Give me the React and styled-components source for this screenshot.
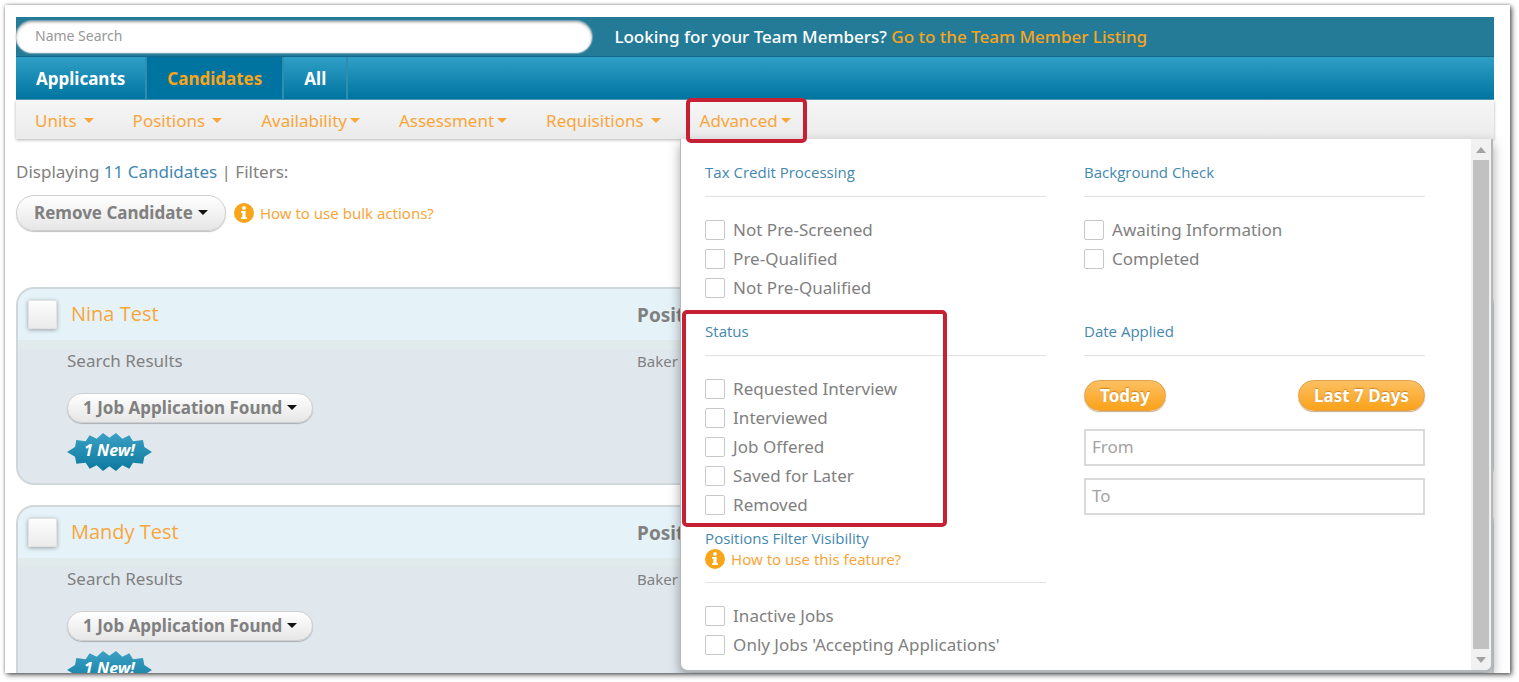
import styled, { createGlobalStyle, css } from "styled-components";

const FILTERS = ["Units", "Positions", "Availability", "Assessment", "Requisitions"];

const TAX_CREDIT = ["Not Pre-Screened", "Pre-Qualified", "Not Pre-Qualified"];
const BACKGROUND = ["Awaiting Information", "Completed"];
const STATUS = ["Requested Interview", "Interviewed", "Job Offered", "Saved for Later", "Removed"];
const VISIBILITY = ["Inactive Jobs", "Only Jobs 'Accepting Applications'"];

const CANDIDATES = [
    { name: "Nina Test", position: "Baker" },
    { name: "Mandy Test", position: "Baker" },
];

export default function App() {
    return (
        <>
            <GlobalStyle />
            <SSheet>
                <STopBar>
                    <SSearch type="search" placeholder="Name Search" aria-label="Name Search" />
                    <STopText>
                        Looking for your Team Members? <SLink href="#team">Go to the Team Member Listing</SLink>
                    </STopText>
                </STopBar>

                <STabs>
                    <STab href="#applicants">Applicants</STab>
                    <STab href="#candidates" $active>Candidates</STab>
                    <STab href="#all">All</STab>
                </STabs>

                <SFilterBar>
                    {FILTERS.map((name) => (
                        <SFilter key={name} type="button">
                            {name}
                            <SCaret $gap={name === "Availability" || name === "Assessment" ? 3 : 7} />
                        </SFilter>
                    ))}
                    <SFilter type="button" aria-expanded="true">
                        Advanced
                        <SCaret $gap={3} />
                        <SFilterMark />
                    </SFilter>
                    <AdvancedPanel />
                </SFilterBar>

                <SSummary>
                    Displaying <SCount>11 Candidates</SCount> | Filters:
                </SSummary>
                <SActions>
                    <SPill type="button" $large>
                        Remove Candidate
                        <SCaret $gap={5} />
                    </SPill>
                    <SHelp href="#bulk">
                        <InfoIcon />
                        How to use bulk actions?
                    </SHelp>
                </SActions>

                <SList>
                    {CANDIDATES.map((candidate) => (
                        <Candidate key={candidate.name} {...candidate} />
                    ))}
                </SList>
            </SSheet>
        </>
    );
}

const AdvancedPanel = () => (
    <SPanel>
        <SPanelGrid>
            <CheckGroup title="Tax Credit Processing" items={TAX_CREDIT} />
            <CheckGroup title="Background Check" items={BACKGROUND} />
            <CheckGroup title="Status" items={STATUS} marked />
            <section>
                <SGroupHead>
                    <SGroupTitle>Date Applied</SGroupTitle>
                </SGroupHead>
                <SDateButtons>
                    <SDateButton type="button">Today</SDateButton>
                    <SDateButton type="button">Last 7 Days</SDateButton>
                </SDateButtons>
                <SDateFields>
                    <SDateInput type="text" placeholder="From" aria-label="From" />
                    <SDateInput type="text" placeholder="To" aria-label="To" />
                </SDateFields>
            </section>
            <CheckGroup title="Positions Filter Visibility" items={VISIBILITY} help="How to use this feature?" />
        </SPanelGrid>
        <SScrollbar>
            <SScrollButton type="button" aria-label="Scroll up">
                <svg width="10" height="6" viewBox="0 0 10 6"><path d="M0 6 5 0l5 6z" fill="#a3a3a3" /></svg>
            </SScrollButton>
            <SThumb />
            <SScrollButton type="button" aria-label="Scroll down">
                <svg width="10" height="6" viewBox="0 0 10 6"><path d="M0 0h10L5 6z" fill="#a3a3a3" /></svg>
            </SScrollButton>
        </SScrollbar>
    </SPanel>
);

const CheckGroup = ({ title, items, help, marked }) => (
    <SGroup>
        {marked && <SGroupMark />}
        <SGroupHead>
            <SGroupTitle>{title}</SGroupTitle>
            {help && (
                <SHelp href="#feature">
                    <InfoIcon />
                    {help}
                </SHelp>
            )}
        </SGroupHead>
        <SChecks>
            {items.map((item) => (
                <SCheckLabel key={item}>
                    <SCheck type="checkbox" />
                    {item}
                </SCheckLabel>
            ))}
        </SChecks>
    </SGroup>
);

const Candidate = ({ name, position }) => (
    <SCard>
        <SCardHead>
            <SCardName>
                <SCardCheck type="checkbox" aria-label={`Select ${name}`} />
                <SNameLink href="#candidate">{name}</SNameLink>
            </SCardName>
            <SCardHeading>Positions</SCardHeading>
        </SCardHead>
        <SCardBody>
            <SResults>
                <SResultsTitle>Search Results</SResultsTitle>
                <SPill type="button">
                    1 Job Application Found
                    <SCaret $gap={5} />
                </SPill>
                <SBurst>
                    <BurstShape />
                    <SBurstText>1 New!</SBurstText>
                </SBurst>
            </SResults>
            <SPosition>{position}</SPosition>
        </SCardBody>
    </SCard>
);

const InfoIcon = () => (
    <svg width="20" height="20" viewBox="0 0 20 20" aria-hidden="true">
        <circle cx="10" cy="10" r="10" fill="#faa41a" />
        <circle cx="10" cy="5" r="1.9" fill="#fff" />
        <path d="M7 8h4.6v6.2H13V16H7v-1.8h1.4V9.800H7z" fill="#fff" />
    </svg>
);

const BurstShape = () => (
    <svg width="85" height="38" viewBox="0 0 255 114" aria-hidden="true">
        <defs>
            <linearGradient id="burst" x1="0" y1="0" x2="0" y2="1">
                <stop offset="0" stopColor="#3ba0c4" />
                <stop offset="1" stopColor="#0c789e" />
            </linearGradient>
        </defs>
        <path
            fill="url(#burst)"
            d="M0 57 24 42 28 21 56 25 68 7 89 17 108 0 127 14 147 0 166 17 187 7 198 25 228 21 232 42 255 57
               232 71 228 92 198 89 187 107 166 97 147 114 127 100 108 114 89 97 68 107 56 89 28 92 24 71z"
        />
    </svg>
);

const GlobalStyle = createGlobalStyle`
    * {
        box-sizing: border-box;
    }

    body {
        margin: 0;
        overflow: hidden;
        background: #fff;
        color: #808080;
        font-family: "Noto Sans", "Open Sans", sans-serif;
        font-size: 17px;
    }

    a {
        text-decoration: none;
    }

    button,
    input {
        margin: 0;
        font-family: inherit;
    }
`;

const SSheet = styled.main`
    height: calc(100vh - 14px);
    margin: 5px 9px 9px 5px;
    padding: 12px 16px 0 11px;
    overflow: hidden;
    background: #fff;
    box-shadow: 2px 2px 5px rgba(0, 0, 0, 0.6), 0 0 3px rgba(0, 0, 0, 0.35);
`;

const STopBar = styled.header`
    display: flex;
    align-items: center;
    gap: 22px;
    height: 40px;
    background: #247b98;
    border-bottom: 1px solid #14688a;
`;

const SSearch = styled.input`
    flex: 0 0 39%;
    height: 32px;
    padding: 0 19px 2px;
    border: 0;
    border-radius: 16px;
    background: #fff;
    box-shadow: inset 0 1px 3px rgba(0, 0, 0, 0.4), 0 0 1px 1px rgba(200, 215, 220, 0.5);
    font-size: 14px;

    &::placeholder {
        color: #989898;
    }
`;

const STopText = styled.p`
    margin: 0;
    color: #fff;
    font-size: 17px;
    font-weight: 500;
    line-height: 24px;
`;

const SLink = styled.a`
    color: #faa41a;
`;

const STabs = styled.nav`
    display: flex;
    height: 43px;
    background: linear-gradient(#2f9fc6, #0074a0);
    border-bottom: 1px solid #4f9fbe;
`;

const STab = styled.a`
    display: flex;
    align-items: center;
    padding: 0 20px;
    border-right: 2px solid #2f8db0;
    color: #fff;
    font-size: 17px;
    font-weight: 700;
    ${(props) => props.$active && css`
        color: #faa41a;
        background: #0074a0;
    `}
`;

const SFilterBar = styled.div`
    position: relative;
    z-index: 1;
    display: flex;
    gap: 39px;
    height: 39px;
    padding-left: 19px;
    background: linear-gradient(#f6f6f6, #ebebeb);
    box-shadow: 0 1px 3px rgba(0, 0, 0, 0.3);
`;

const SFilter = styled.button`
    position: relative;
    display: flex;
    align-items: center;
    padding: 2px 0 0;
    border: 0;
    background: none;
    color: #faa53a;
    font-size: 17px;
`;

const SCaret = styled.span`
    margin-left: ${(props) => props.$gap}px;
    border: 5px solid transparent;
    border-top-color: currentColor;
    border-bottom: 0;
`;

const mark = css`
    position: absolute;
    border: 4px solid #c62035;
    border-radius: 5px;
    pointer-events: none;
`;

const SFilterMark = styled.span`
    ${mark}
    z-index: 3;
    inset: -2px -16px -4px -14px;
`;

const SPanel = styled.div`
    position: absolute;
    top: 100%;
    right: 1px;
    display: flex;
    width: 55%;
    border: 1px solid #b4b8ba;
    border-top: 0;
    border-right-width: 2px;
    border-bottom-width: 2px;
    border-radius: 0 0 8px 8px;
    background: #fff;
    box-shadow: 0 5px 12px rgba(0, 0, 0, 0.35);
`;

const SPanelGrid = styled.div`
    flex: 1;
    display: grid;
    grid-template-columns: 1fr 1fr;
    grid-template-rows: minmax(149px, auto) auto auto;
    gap: 10px 38px;
    padding: 24px 46px 11px 24px;
`;

const SGroup = styled.section`
    position: relative;
`;

const SGroupMark = styled.span`
    ${mark}
    inset: -12px auto -8px -23px;
    width: 265px;
`;

const SGroupHead = styled.header`
    padding-bottom: 13px;
    border-bottom: 1px solid #e2e2e2;
`;

const SGroupTitle = styled.h3`
    margin: 0 0 2px;
    color: #4488b0;
    font-family: "Open Sans", sans-serif;
    font-size: 15px;
    font-weight: 400;
    line-height: 18px;
`;

const SChecks = styled.div`
    display: grid;
    padding-top: 18px;
`;

const SCheckLabel = styled.label`
    display: flex;
    align-items: center;
    gap: 8px;
    height: 29px;
    font-size: 17px;
`;

const SCheck = styled.input`
    appearance: none;
    width: 20px;
    height: 20px;
    border: 1px solid #c8c8c8;
    border-radius: 2px;
    background: #fff;
`;

const SDateButtons = styled.div`
    display: flex;
    justify-content: space-between;
    padding: 24px 0 18px;
`;

const SDateButton = styled.button`
    height: 31px;
    padding: 0 15px;
    border: 1px solid #e3a04a;
    border-radius: 16px;
    background: linear-gradient(#fcc062, #faa21a);
    box-shadow: 0 1px 1px rgba(150, 90, 0, 0.5);
    color: #fff;
    font-size: 17px;
    font-weight: 700;
    line-height: 24px;
    text-shadow: 0 -1px 1px rgba(160, 90, 0, 0.5);
`;

const SDateFields = styled.div`
    display: grid;
    gap: 12px;
`;

const SDateInput = styled.input`
    width: 100%;
    height: 37px;
    padding: 0 6px 2px;
    border: 2px solid #dadada;
    background: #fff;
    font-size: 17px;

    &::placeholder {
        color: #a4a4a4;
    }
`;

const SScrollbar = styled.div`
    display: flex;
    flex-direction: column;
    width: 20px;
    background: #f1f1f1;
    border-radius: 0 0 6px 0;
`;

const SScrollButton = styled.button`
    display: flex;
    align-items: center;
    justify-content: center;
    height: 21px;
    padding: 0;
    border: 0;
    background: none;
`;

const SThumb = styled.div`
    flex: 1;
    margin: 0 2px;
    background: #c1c1c1;
`;

const SSummary = styled.p`
    margin: 0;
    padding-top: 21px;
    line-height: 24px;
`;

const SCount = styled.span`
    color: #4488b0;
`;

const SActions = styled.div`
    display: flex;
    align-items: center;
    gap: 8px;
    padding-top: 11px;
`;

const SPill = styled.button`
    display: flex;
    align-items: center;
    height: ${(props) => (props.$large ? 36 : 30)}px;
    padding: ${(props) => (props.$large ? "0 17px 2px" : "0 15px 2px")};
    border: 1px solid #cfcfcf;
    border-radius: 18px;
    background: linear-gradient(#fff, #e6e6e6);
    box-shadow: 0 1px 1px rgba(0, 0, 0, 0.25);
    color: #808080;
    font-size: 17px;
    font-weight: 700;

    ${SCaret} {
        border-top-color: #111;
    }
`;

const SHelp = styled.a`
    display: flex;
    align-items: center;
    gap: 6px;
    color: #faa53a;
    font-size: 15px;
    line-height: 20px;
`;

const SList = styled.div`
    display: grid;
    gap: 20px;
    padding-top: 56px;
`;

const SCard = styled.article`
    height: 198px;
    overflow: hidden;
    border: 2px solid #d0d7da;
    border-radius: 18px;
    background: #e0e8ee;
`;

const SCardHead = styled.div`
    display: grid;
    grid-template-columns: 42% 1fr;
    align-items: center;
    height: 51px;
    background: #e5f3f9;
`;

const SCardName = styled.div`
    display: flex;
    align-items: center;
    gap: 14px;
    padding-left: 10px;
`;

const SCardCheck = styled.input`
    appearance: none;
    width: 29px;
    height: 29px;
    margin: 0;
    border: 1px solid #e2e2e2;
    border-radius: 2px;
    background: linear-gradient(#fdfdfd, #ebebeb);
    box-shadow: 0 1px 4px rgba(0, 0, 0, 0.35);
`;

const SNameLink = styled.a`
    padding-bottom: 2px;
    color: #faa53a;
    font-family: "Open Sans", sans-serif;
    font-size: 20px;
    line-height: 26px;
`;

const SCardHeading = styled.h2`
    margin: 0;
    color: #808080;
    font-size: 19px;
`;

const SCardBody = styled.div`
    display: grid;
    grid-template-columns: 42% 1fr;
    padding-top: 9px;
    background: linear-gradient(#e2ebec 9px, #e0e8ee 9px);
`;

const SResults = styled.div`
    display: flex;
    flex-direction: column;
    align-items: flex-start;
    padding-left: 49px;
`;

const SResultsTitle = styled.p`
    margin: 0 0 20px;
    line-height: 24px;
`;

const SPosition = styled.p`
    margin: 0;
    font-size: 15px;
    line-height: 24px;
`;

const SBurst = styled.div`
    position: relative;
    display: flex;
    align-items: center;
    justify-content: center;
    margin-top: 10px;
`;

const SBurstText = styled.strong`
    position: absolute;
    padding-bottom: 4px;
    color: #fff;
    font-size: 16px;
    font-style: italic;
`;
